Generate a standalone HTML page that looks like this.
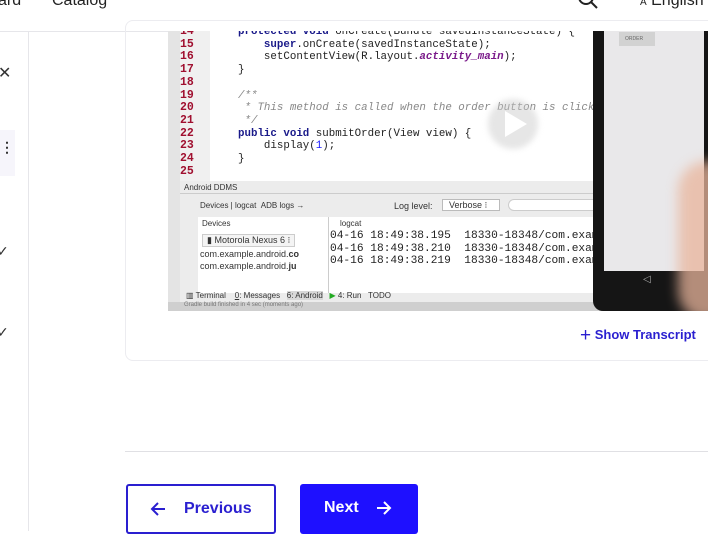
<!DOCTYPE html>
<html><head><meta charset="utf-8"><style>
*{margin:0;padding:0;box-sizing:border-box}
body{width:708px;height:531px;overflow:hidden;background:#fff;font-family:"Liberation Sans",sans-serif;position:relative;color:#222}
.a{position:absolute}
.mono{font-family:"Liberation Mono",monospace;font-size:10.8px;white-space:pre;line-height:12.7px}
.sm{font-size:8px;color:#333;white-space:nowrap}
</style></head><body>
<div class="a" style="left:-2px;top:-8px;font-size:16px;color:#222">ard</div>
<div class="a" style="left:52px;top:-8px;font-size:16px;color:#222">Catalog</div>
<svg class="a" style="left:577px;top:-8px" width="22" height="18"><circle cx="9" cy="5" r="7" fill="none" stroke="#222" stroke-width="2"/><line x1="14" y1="10" x2="20" y2="16" stroke="#222" stroke-width="2"/></svg>
<div class="a" style="left:640px;top:-8px;font-size:16px;color:#222"><span style="font-size:10px">A</span> English</div>
<div class="a" style="left:0;top:31px;width:708px;height:1px;background:#e6e6ea"></div>
<div class="a" style="left:28px;top:31px;width:1px;height:500px;background:#e6e6ea"></div>
<div class="a" style="left:-5px;top:130px;width:20px;height:46px;background:#f6f5fb"></div>
<div class="a" style="left:-2px;top:63px;font-size:16px;color:#333">✕</div>
<div class="a" style="left:0;top:145px;font-size:14px;font-weight:bold;color:#333;line-height:5px">⋮</div>
<div class="a" style="left:-3px;top:243px;font-size:14px;color:#333">✓</div>
<div class="a" style="left:-3px;top:324px;font-size:14px;color:#333">✓</div>
<div class="a" style="left:125px;top:20px;width:620px;height:341px;border:1px solid #ececf0;border-radius:8px"></div>
<div class="a" style="left:168px;top:31px;width:540px;height:280px;background:#fff;overflow:hidden">
 <div class="a" style="left:0;top:0;width:12px;height:280px;background:#e4e4e4"></div>
 <div class="a" style="left:12px;top:0;width:30px;height:150px;background:#f0f0f0"></div>
 <div class="a mono" style="left:12px;top:-5px;color:#a01030;font-weight:bold;font-size:11.5px">14
15
16
17
18
19
20
21
22
23
24
25</div>
 <div class="a mono" style="left:70px;top:-5px;color:#222"><b style="color:#1a1a8a">protected void</b> onCreate(Bundle savedInstanceState) {
    <b style="color:#1a1a8a">super</b>.onCreate(savedInstanceState);
    setContentView(R.layout.<b style="color:#7a1a8a;font-style:italic">activity_main</b>);
}

<span style="color:#888;font-style:italic">/**
 * This method is called when the order button is clicked
 */</span>
<b style="color:#1a1a8a">public void</b> submitOrder(View view) {
    display(<span style="color:#1a1aff">1</span>);
}</div>
 <div class="a" style="left:320px;top:68px;width:50px;height:50px;border-radius:50%;background:rgba(200,200,200,.45);filter:blur(3px)"></div>
 <svg class="a" style="left:333px;top:78px" width="28" height="30"><polygon points="4,2 26,15 4,28" fill="#fff"/></svg>
 <div class="a" style="left:12px;top:150px;width:430px;height:130px;background:#ececec"></div>
 <div class="a sm" style="left:16px;top:152px">Android DDMS</div>
 <div class="a" style="left:12px;top:162px;width:430px;height:1px;background:#ccc"></div>
 <div class="a sm" style="left:32px;top:170px">Devices | logcat &nbsp;ADB logs →</div>
 <div class="a sm" style="left:226px;top:170px;font-size:9px">Log level:</div>
 <div class="a sm" style="left:274px;top:168px;width:58px;height:12px;background:#fff;border:1px solid #bbb;padding-left:6px;font-size:9px">Verbose ⁝</div>
 <div class="a" style="left:340px;top:168px;width:100px;height:12px;background:#fff;border:1px solid #ccc;border-radius:6px"></div>
 <div class="a" style="left:30px;top:186px;width:130px;height:76px;background:#fff"></div>
 <div class="a sm" style="left:34px;top:188px">Devices</div>
 <div class="a sm" style="left:34px;top:203px;background:#f4f4f4;border:1px solid #ccc;padding:0 4px;font-size:9px">▮ Motorola Nexus 6 ⁝</div>
 <div class="a sm" style="left:32px;top:218px;font-size:9px">com.example.android.<b>co</b></div>
 <div class="a sm" style="left:32px;top:230px;font-size:9px">com.example.android.<b>ju</b></div>
 <div class="a" style="left:160px;top:186px;width:282px;height:76px;background:#fff;border-left:1px solid #ccc"></div>
 <div class="a sm" style="left:172px;top:188px">logcat</div>
 <div class="a mono" style="left:162px;top:199px;font-size:11.2px;line-height:12.5px;color:#222">04-16 18:49:38.195  18330-18348/com.examp
04-16 18:49:38.210  18330-18348/com.examp
04-16 18:49:38.219  18330-18348/com.examp</div>
 <div class="a sm" style="left:18px;top:260px">▥ Terminal &nbsp;&nbsp; <u>0</u>: Messages &nbsp;&nbsp;<span style="background:#d8d8d8">6: Android</span> &nbsp;&nbsp;<span style="color:#2a2">▶</span> 4: Run &nbsp; TODO</div>
 <div class="a" style="left:0;top:271px;width:540px;height:9px;background:#cfcfcf"></div>
 <div class="a sm" style="left:16px;top:271px;font-size:6px;color:#777">Gradle build finished in 4 sec (moments ago)</div>
 <div class="a" style="left:425px;top:0;width:120px;height:280px;background:#151515;border-radius:0 0 0 10px"></div>
 <div class="a" style="left:436px;top:0;width:100px;height:240px;background:#e9e8ea"></div>
 <div class="a" style="left:451px;top:1px;width:36px;height:14px;background:#d2d2d2;font-size:5px;color:#666;padding:4px 0 0 6px">ORDER</div>
 <div class="a" style="left:475px;top:243px;color:#aaa;font-size:10px">◁</div>
 <div class="a" style="left:510px;top:130px;width:60px;height:160px;border-radius:30px;background:#e9b59c;opacity:.75;filter:blur(6px)"></div>
</div>
<div class="a" style="left:580px;top:325px;color:#2a1fd0;font-size:13px;font-weight:bold"><span style="font-size:19px;font-weight:normal;vertical-align:-2px">+</span> Show Transcript</div>
<div class="a" style="left:125px;top:451px;width:600px;height:1px;background:#e0e0e4"></div>
<div class="a" style="left:126px;top:484px;width:150px;height:50px;border:2px solid #2a1fd0;border-radius:3px;color:#2a1fd0;font-size:16px;font-weight:bold">
 <svg class="a" style="left:22px;top:16px" width="16" height="14"><path d="M15 7H2M8 1L2 7l6 6" fill="none" stroke="#2a1fd0" stroke-width="2"/></svg>
 <span class="a" style="left:56px;top:14px">Previous</span></div>
<div class="a" style="left:300px;top:484px;width:118px;height:50px;background:#1e10ff;border-radius:3px;color:#fff;font-size:16px;font-weight:bold">
 <span class="a" style="left:24px;top:15px">Next</span>
 <svg class="a" style="left:76px;top:17px" width="16" height="14"><path d="M1 7h13M8 1l6 6-6 6" fill="none" stroke="#fff" stroke-width="2"/></svg></div>
</body></html>
